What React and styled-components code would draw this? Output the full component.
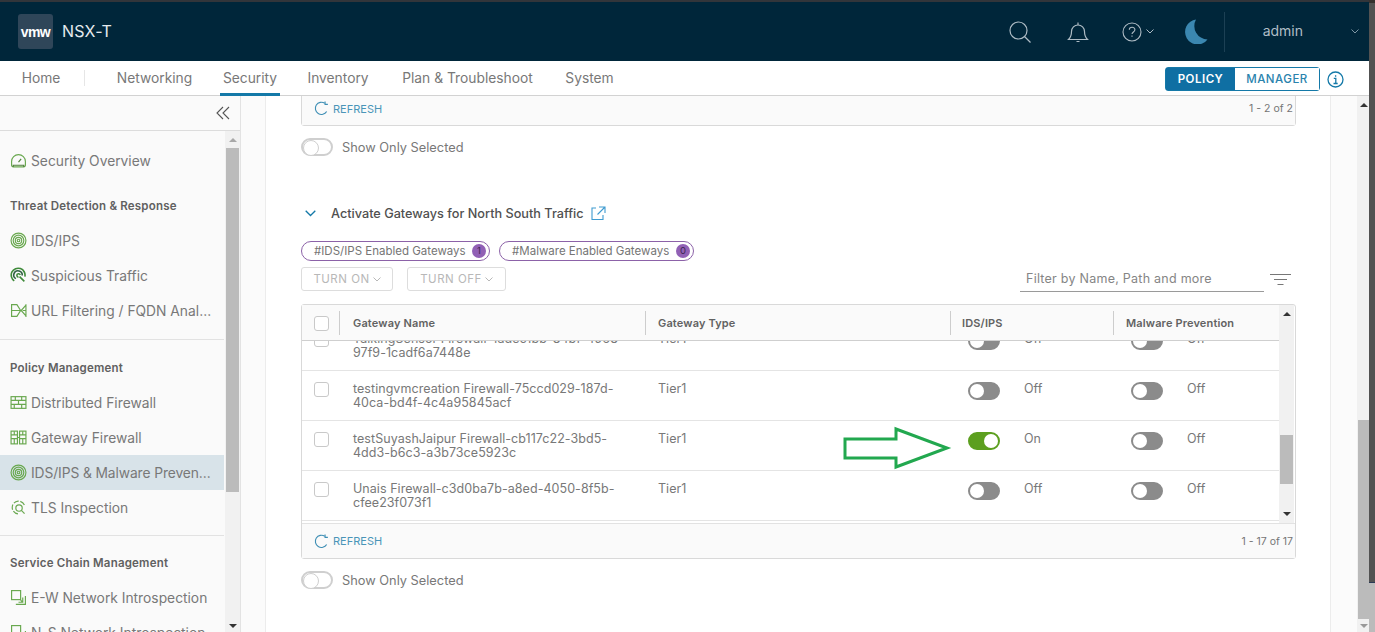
import styled, { createGlobalStyle } from "styled-components";

const GlobalStyle = createGlobalStyle`
    html, body {
        margin: 0;
        height: 100%;
        overflow: hidden;
        background-color: #ffffff;
    }

    * {
        box-sizing: border-box;
    }

    body {
        color: #6b6b6b;
        font-family: "Inter", "Open Sans", sans-serif;
        font-size: 13px;
    }
`;

const Pagina = styled.div`
    display: flex;
    height: 632px;
    overflow: hidden;
    width: 1375px;
`;

const Coluna = styled.div`
    display: flex;
    flex-direction: column;
    height: 100%;
    width: 1369px;
`;

const Faixa = styled.div`
    background-color: #bbbbbb;
    height: 100%;
    width: 6px;
`;

const FaixaEscura = styled.div`
    background-color: #525252;
    border-bottom: 1px solid #2c3a55;
    border-top: 3px solid #35302e;
    height: 583px;
`;

const Cabecalho = styled.header`
    align-items: center;
    background-color: #00263a;
    border-top: 2px solid #32353a;
    display: flex;
    flex: none;
    height: 61px;
    padding-left: 18px;
`;

const LogoCaixa = styled.div`
    align-items: center;
    background-color: #2f4659;
    border-radius: 3px;
    color: #ffffff;
    display: flex;
    font-family: "Liberation Sans", sans-serif;
    font-size: 14px;
    font-weight: 700;
    height: 35px;
    justify-content: center;
    letter-spacing: -0.6px;
    width: 35px;
`;

const Produto = styled.div`
    color: #e4eaee;
    font-size: 16px;
    letter-spacing: 0.2px;
    margin-left: 9px;
    margin-top: -2px;
`;

const CabecalhoIcones = styled.div`
    align-items: center;
    display: flex;
    height: 100%;
    margin-left: auto;
`;

const IconeTopo = styled.span`
    align-items: center;
    display: flex;
    margin-left: ${(p) => p.$gap}px;
`;

const Separador = styled.div`
    background-color: #1c4054;
    height: 40px;
    margin-left: 16px;
    width: 1px;
`;

const Usuario = styled.div`
    color: #b0bec6;
    font-size: 14px;
    margin-left: 38px;
    margin-top: -2px;
`;

const Navegacao = styled.nav`
    align-items: stretch;
    background-color: #ffffff;
    border-bottom: 1px solid #d2d2d2;
    display: flex;
    flex: none;
    height: 35px;
    padding-left: 22px;
    padding-right: 25px;
`;

const NavLink = styled.div`
    align-items: center;
    border-bottom: ${(p) => (p.$ativo ? "3px solid #1479a8" : "3px solid transparent")};
    color: #787878;
    display: flex;
    font-size: 13.8px;
    height: 35px;
    justify-content: center;
    margin-left: ${(p) => p.$gap}px;
    padding-top: 1px;
    width: ${(p) => p.$w}px;
`;

const NavDivisor = styled.div`
    align-self: center;
    background-color: #e6e6e6;
    height: 16px;
    margin-left: 24px;
    width: 1px;
`;

const Alternador = styled.div`
    border: 1px solid #1479a8;
    border-radius: 3px;
    display: flex;
    height: 24px;
    margin-left: auto;
    margin-top: 6px;
    width: 155px;
`;

const AlternadorBotao = styled.div`
    align-items: center;
    background-color: ${(p) => (p.$ativo ? "#0f6fa3" : "#ffffff")};
    color: ${(p) => (p.$ativo ? "#ffffff" : "#2a83ad")};
    display: flex;
    font-size: 11.5px;
    font-weight: ${(p) => (p.$ativo ? 600 : 500)};
    justify-content: center;
    letter-spacing: 0.5px;
    width: ${(p) => p.$w}px;
`;

const InfoIcone = styled.span`
    align-items: center;
    display: flex;
    margin-left: 7px;
    margin-top: 9px;
    height: 18px;
`;

const Corpo = styled.div`
    display: flex;
    flex: 1;
    min-height: 0;
`;

const BarraLateral = styled.aside`
    background-color: #fafafa;
    border-right: 1px solid #e3e3e3;
    display: flex;
    flex: none;
    flex-direction: column;
    width: 241px;
`;

const Recolher = styled.div`
    align-items: center;
    border-bottom: 1px solid #dcdcdc;
    display: flex;
    flex: none;
    height: 35px;
    justify-content: flex-end;
    padding-right: 10px;
`;

const LateralInterna = styled.div`
    display: flex;
    flex: 1;
    min-height: 0;
`;

const Lista = styled.div`
    flex: none;
    overflow: hidden;
    padding-top: 12px;
    width: 225px;
`;

const ItemLista = styled.div`
    align-items: center;
    background-color: ${(p) => (p.$ativo ? "#d8e3e9" : "transparent")};
    color: #787878;
    display: flex;
    font-size: 13.8px;
    gap: 4px;
    height: 35px;
    letter-spacing: ${(p) => (p.$ativo ? "-0.1px" : "0")};
    padding: 0 11px 0 10px;
    width: 224px;

    svg {
        flex: none;
    }
`;

const ItemTexto = styled.span`
    overflow: hidden;
    text-overflow: ellipsis;
    white-space: nowrap;
`;

const Secao = styled.div`
    align-items: center;
    color: #606060;
    display: flex;
    font-size: 11.5px;
    font-weight: 600;
    height: 35px;
    letter-spacing: 0.2px;
    margin-top: 10px;
    padding-left: 10px;
`;

const Divisor = styled.div`
    background-color: #e2e2e2;
    height: 1px;
    margin-top: ${(p) => p.$cima}px;
    margin-bottom: ${(p) => p.$baixo}px;
    width: 224px;
`;

const Rolagem = styled.div`
    background-color: #f1f1f1;
    display: flex;
    flex: none;
    flex-direction: column;
    height: 100%;
    padding: 0 1px;
    width: ${(p) => p.$w}px;
`;

const Seta = styled.div`
    align-items: center;
    display: flex;
    flex: none;
    height: ${(p) => p.$h}px;
    justify-content: center;
    margin-top: ${(p) => (p.$fim ? "auto" : "0")};
`;

const SetaForma = styled.span`
    border-left: 4px solid transparent;
    border-right: 4px solid transparent;
    ${(p) => (p.$baixo ? "border-top" : "border-bottom")}: 4px solid ${(p) => p.$cor};
    height: 0;
    width: 0;
`;

const Polegar = styled.div`
    background-color: #bbbbbb;
    flex: none;
    height: ${(p) => p.$h}px;
    margin-top: ${(p) => p.$top}px;
`;

const Margem = styled.div`
    background-color: #fbfbfb;
    flex: none;
    width: ${(p) => p.$w}px;
`;

const Painel = styled.main`
    background-color: #ffffff;
    border-left: 1px solid #ececec;
    border-right: 1px solid #ececec;
    flex: none;
    overflow: hidden;
    padding: 0 34px 0 35px;
    width: 1066px;
`;

const Cartao = styled.div`
    background-color: #ffffff;
    border: 1px solid #d9d9d9;
    border-radius: 3px;
    margin-top: ${(p) => p.$top}px;
`;

const Rodape = styled.div`
    align-items: center;
    background-color: #fafafa;
    border-top: ${(p) => (p.$linha ? "1px solid #e2e2e2" : "none")};
    display: flex;
    height: 35px;
    justify-content: space-between;
    padding: ${(p) => (p.$linha ? "0" : "2px")} 2px 0 12px;
`;

const Atualizar = styled.div`
    align-items: center;
    color: #4a95b8;
    display: flex;
    font-size: 11px;
    gap: 4px;
`;

const Contagem = styled.div`
    color: #757575;
    font-size: 10.5px;
`;

const MostrarLinha = styled.div`
    align-items: center;
    color: #787878;
    display: flex;
    font-size: 12.8px;
    gap: 9px;
    height: 18px;
    margin-top: ${(p) => p.$top}px;
`;

const Chave = styled.div`
    background-color: ${(p) => (p.$ligada ? "#5c9f1f" : p.$vazia ? "#ffffff" : "#8b8b8b")};
    border: 2px solid ${(p) => (p.$ligada ? "#5c9f1f" : p.$vazia ? "#cfcfcf" : "#8b8b8b")};
    border-radius: 9px;
    display: flex;
    flex: none;
    height: 18px;
    justify-content: ${(p) => (p.$ligada ? "flex-end" : "flex-start")};
    width: 32px;

    &::after {
        background-color: #ffffff;
        border: ${(p) => (p.$vazia ? "1px solid #cfcfcf" : "none")};
        border-radius: 50%;
        content: "";
        height: 14px;
        width: 14px;
    }
`;

const Titulo = styled.div`
    align-items: center;
    color: #505050;
    display: flex;
    font-size: 12.7px;
    font-weight: 500;
    height: 20px;
    margin-top: 47px;
    padding-left: 4px;
`;

const TituloTexto = styled.span`
    margin-left: 15px;
    margin-right: 7px;
`;

const Pilulas = styled.div`
    display: flex;
    gap: 9px;
    margin-top: 18px;
`;

const Pilula = styled.div`
    align-items: center;
    border: 1px solid #8c62a8;
    border-radius: 10px;
    color: #757575;
    display: flex;
    font-size: 11.5px;
    height: 20px;
    justify-content: space-between;
    padding: 0 3px 1px 12px;
    width: ${(p) => p.$w}px;
`;

const Selo = styled.span`
    align-items: center;
    background-color: #9160b5;
    border-radius: 50%;
    color: #3d2553;
    display: flex;
    font-size: 9.5px;
    height: 14px;
    justify-content: center;
    width: 14px;
`;

const Ferramentas = styled.div`
    align-items: flex-start;
    display: flex;
    gap: 14px;
    height: 25px;
    margin-top: 6px;
`;

const BotaoInativo = styled.div`
    align-items: center;
    border: 1px solid #dddddd;
    border-radius: 3px;
    color: #b8b8b8;
    display: flex;
    font-size: 11.5px;
    gap: 3px;
    height: 24px;
    justify-content: center;
    letter-spacing: 0.5px;
    width: ${(p) => p.$w}px;
`;

const Filtro = styled.div`
    align-items: center;
    border-bottom: 1px solid #9a9a9a;
    color: #858585;
    display: flex;
    font-size: 12.5px;
    height: 25px;
    letter-spacing: 0.25px;
    margin-left: auto;
    padding-bottom: 2px;
    padding-left: 6px;
    width: 244px;
`;

const FiltroIcone = styled.span`
    display: flex;
    margin-left: -8px;
    margin-right: 5px;
    margin-top: 7px;
`;

const TabelaArea = styled.div`
    display: flex;
    height: 218px;
`;

const TabelaConteudo = styled.div`
    display: flex;
    flex: none;
    flex-direction: column;
    width: 977px;
`;

const Linha = styled.div`
    display: grid;
    grid-template-columns: 37px 306px 305px 163px 166px;
`;

const CabecalhoLinha = styled(Linha)`
    background-color: #fafafa;
    border-bottom: 1px solid #cfcfcf;
    flex: none;
    height: 36px;
`;

const CabecalhoCelula = styled.div`
    align-items: center;
    border-left: 1px solid #cdcdcd;
    color: #626262;
    display: flex;
    font-size: 11px;
    font-weight: 600;
    height: 24px;
    letter-spacing: 0.15px;
    margin-top: 6px;
    padding-bottom: 1px;
    padding-left: ${(p) => p.$esq}px;
`;

const ColunaMarca = styled.div`
    display: flex;
    height: 24px;
    margin-top: 6px;
    padding: 5px 0 0 12px;
`;

const Marca = styled.div`
    background-color: #ffffff;
    border: 1px solid #c9c9c9;
    border-radius: 3px;
    height: 15px;
    width: 15px;
`;

const TabelaCorpo = styled.div`
    flex: 1;
    overflow: hidden;
`;

const LinhaDados = styled(Linha)`
    border-bottom: 1px solid #e4e4e4;
    height: 50px;
    margin-top: ${(p) => p.$top || 0}px;
`;

const Celula = styled.div`
    color: #787878;
    font-size: 12.5px;
    letter-spacing: 0.05px;
    line-height: 14px;
    padding: 11px 0 0 ${(p) => p.$esq}px;
`;

const CelulaMarca = styled.div`
    padding: 11px 0 0 12px;
`;

const CelulaChave = styled.div`
    color: #787878;
    display: flex;
    font-size: 12.5px;
    line-height: 14px;
    padding: 11px 0 0 18px;
`;

const ChaveTexto = styled.span`
    margin-left: 24px;
`;

const SetaVerde = styled.svg`
    height: 44px;
    left: 842px;
    pointer-events: none;
    position: absolute;
    top: 426px;
    width: 110px;
`;

const ICONE_VERDE = "#69a84f";

function IconeMenu({ nome }) {
    const props = { width: 17, height: 17, viewBox: "0 0 16 16", fill: "none", stroke: ICONE_VERDE, strokeWidth: 1.1 };
    switch (nome) {
        case "painel":
            return (
                <svg {...props}>
                    <path d="M1.5 12.5V9a6.5 6.5 0 0 1 13 0v3.5a1.5 1.5 0 0 1-1.5 1.5H3a1.5 1.5 0 0 1-1.5-1.5z" />
                    <path d="M3 14v-1.5h10V14M8 9.5l2.5-3" stroke="#4f7f3a" />
                </svg>
            );
        case "radar":
            return (
                <svg {...props}>
                    <circle cx="8" cy="8" r="7" />
                    <circle cx="8" cy="8" r="5" />
                    <circle cx="8" cy="8" r="3" />
                    <circle cx="8" cy="8" r="1.2" />
                </svg>
            );
        case "suspeito":
            return (
                <svg {...props} stroke="#3f8a3a" strokeWidth={1.5}>
                    <path d="M4 13A6.5 6.5 0 1 1 14 9" />
                    <path d="M5.5 11A4 4 0 1 1 11.5 8" stroke="#2f5f44" />
                    <path d="M8 9.5a1.6 1.6 0 1 1 1.6-2M9 9l4.5 4.5" />
                </svg>
            );
        case "url":
            return (
                <svg {...props}>
                    <path d="M1.5 2.5h5l3.5 5.5-3.5 5.5h-5zM1.5 8h8.5" />
                    <path d="M15 3 10.5 8l4.5 5M15 2v12M12 8h3" />
                </svg>
            );
        case "distribuido":
            return (
                <svg {...props}>
                    <rect x="1" y="2.5" width="14" height="11" />
                    <path d="M1 6h14M1 9.8h14M5 2.5V6M11 2.5V6M8 6v3.8M4 9.8v3.7M11 9.8v3.7" />
                </svg>
            );
        case "gateway":
            return (
                <svg {...props}>
                    <rect x="1" y="2" width="6" height="12" />
                    <rect x="9" y="2" width="6" height="12" />
                    <path d="M1 5.5h6M1 9h6M9 5.5h6M9 9h6M4 2v3.5M12 2v3.5M4 9v5M12 9v5M7 8h2" />
                </svg>
            );
        case "tls":
            return (
                <svg {...props}>
                    <path d="M7.5 14A6 6 0 1 1 14 7" strokeDasharray="5 1.5" />
                    <circle cx="8.5" cy="8.5" r="3" />
                    <path d="m10.7 10.7 3 3" />
                </svg>
            );
        default:
            return (
                <svg {...props}>
                    <rect x="1.5" y="1.5" width="8.5" height="8.5" />
                    <path d="M5.5 14.5h9v-8M12 8v4.5H8M10 10.5l2 2" />
                </svg>
            );
    }
}

function Barra({ largura, polegarTopo, polegarAltura, setaCima, setaBaixo, corCima, corBaixo }) {
    return (
        <Rolagem $w={largura}>
            <Seta $h={setaCima}><SetaForma $cor={corCima} /></Seta>
            <Polegar $top={polegarTopo} $h={polegarAltura} />
            <Seta $h={setaBaixo} $fim><SetaForma $baixo $cor={corBaixo} /></Seta>
        </Rolagem>
    );
}

function IconeAtualizar() {
    return (
        <svg width="15" height="15" viewBox="0 0 16 16" fill="none" stroke="#3f8fb5" strokeWidth="1.2">
            <path d="M13.5 11.2A6.5 6.5 0 1 1 11.5 2.4" />
            <path d="M11.8 0.6v3h3" />
        </svg>
    );
}

function Seta8({ cor }) {
    return (
        <svg width="8" height="5" viewBox="0 0 8 5" fill="none" stroke={cor} strokeWidth="1">
            <path d="M0.5 0.5 4 4l3.5-3.5" />
        </svg>
    );
}

const gateways = [
    { nome: ["TalkingSensor Firewall-1adec1bb-84bf-4968-", "97f9-1cadf6a7448e"], ids: false, topo: -20 },
    { nome: ["testingvmcreation Firewall-75ccd029-187d-", "40ca-bd4f-4c4a95845acf"], ids: false },
    { nome: ["testSuyashJaipur Firewall-cb117c22-3bd5-", "4dd3-b6c3-a3b73ce5923c"], ids: true },
    { nome: ["Unais Firewall-c3d0ba7b-a8ed-4050-8f5b-", "cfee23f073f1"], ids: false },
];

function App() {
    return (
        <Pagina>
            <GlobalStyle />
            <Coluna>
                <Cabecalho>
                    <LogoCaixa>vmw</LogoCaixa>
                    <Produto>NSX-T</Produto>
                    <CabecalhoIcones>
                        <IconeTopo $gap={0}>
                            <svg width="24" height="24" viewBox="0 0 24 24" fill="none" stroke="#adbbc4" strokeWidth="1.2">
                                <circle cx="10.5" cy="10.5" r="8.5" />
                                <path d="m16.5 16.5 6 6" />
                            </svg>
                        </IconeTopo>
                        <IconeTopo $gap={35}>
                            <svg width="22" height="24" viewBox="0 0 22 24" fill="none" stroke="#adbbc4" strokeWidth="1.2">
                                <path d="M1.5 19.5c2.5-2.5 3-4 3-8a6.5 6.5 0 0 1 13 0c0 4 .5 5.5 3 8z" />
                                <path d="M11 5V2.5M9.5 21.5h3" />
                            </svg>
                        </IconeTopo>
                        <IconeTopo $gap={33}>
                            <svg width="20" height="20" viewBox="0 0 20 20" fill="none" stroke="#adbbc4" strokeWidth="1.1">
                                <circle cx="10" cy="10" r="9" />
                                <path d="M7.3 7.8c0-3.4 5.6-3.4 5.6-.1 0 2.2-2.9 2.3-2.9 4.4" />
                                <path d="M10 13.6v1.2" />
                            </svg>
                        </IconeTopo>
                        <IconeTopo $gap={4}>
                            <Seta8 cor="#adbbc4" />
                        </IconeTopo>
                        <IconeTopo $gap={30}>
                            <svg width="24" height="25" viewBox="0 0 24 25" fill="#3b87b0">
                                <path d="M12 0.5A12.5 12.5 0 1 0 23.5 20.5 13.5 13.5 0 0 1 12 0.5Z" />
                            </svg>
                        </IconeTopo>
                        <Separador />
                        <Usuario>admin</Usuario>
                        <IconeTopo $gap={48}>
                            <Seta8 cor="#7f97a5" />
                        </IconeTopo>
                        <IconeTopo $gap={10} />
                    </CabecalhoIcones>
                </Cabecalho>

                <Navegacao>
                    <NavLink $w={38} $gap={0}>Home</NavLink>
                    <NavDivisor />
                    <NavLink $w={75} $gap={32}>Networking</NavLink>
                    <NavLink $w={60} $gap={28} $ativo>Security</NavLink>
                    <NavLink $w={62} $gap={27}>Inventory</NavLink>
                    <NavLink $w={133} $gap={32}>Plan &amp; Troubleshoot</NavLink>
                    <NavLink $w={49} $gap={31}>System</NavLink>
                    <Alternador>
                        <AlternadorBotao $ativo $w={69}>POLICY</AlternadorBotao>
                        <AlternadorBotao $w={84}>MANAGER</AlternadorBotao>
                    </Alternador>
                    <InfoIcone>
                        <svg width="17" height="17" viewBox="0 0 17 17" fill="none" stroke="#1479a8" strokeWidth="1.3">
                            <circle cx="8.5" cy="8.5" r="7.5" />
                            <path d="M6.8 7.3h2v5M6.5 12.5h4.2M8.6 4.2v1.6" />
                        </svg>
                    </InfoIcone>
                </Navegacao>

                <Corpo>
                    <BarraLateral>
                        <Recolher>
                            <svg width="14" height="14" viewBox="0 0 14 14" fill="none" stroke="#555555" strokeWidth="1.1">
                                <path d="M7 1 1 7l6 6M13 1 7 7l6 6" />
                            </svg>
                        </Recolher>
                        <LateralInterna>
                            <Lista>
                                <ItemLista><IconeMenu nome="painel" /><ItemTexto>Security Overview</ItemTexto></ItemLista>
                                <Secao>Threat Detection &amp; Response</Secao>
                                <ItemLista><IconeMenu nome="radar" /><ItemTexto>IDS/IPS</ItemTexto></ItemLista>
                                <ItemLista><IconeMenu nome="suspeito" /><ItemTexto>Suspicious Traffic</ItemTexto></ItemLista>
                                <ItemLista><IconeMenu nome="url" /><ItemTexto>URL Filtering / FQDN Analysis</ItemTexto></ItemLista>
                                <Divisor $cima={11} $baixo={0} />
                                <Secao>Policy Management</Secao>
                                <ItemLista><IconeMenu nome="distribuido" /><ItemTexto>Distributed Firewall</ItemTexto></ItemLista>
                                <ItemLista><IconeMenu nome="gateway" /><ItemTexto>Gateway Firewall</ItemTexto></ItemLista>
                                <ItemLista $ativo><IconeMenu nome="radar" /><ItemTexto>IDS/IPS &amp; Malware Prevention</ItemTexto></ItemLista>
                                <ItemLista><IconeMenu nome="tls" /><ItemTexto>TLS Inspection</ItemTexto></ItemLista>
                                <Divisor $cima={10} $baixo={-1} />
                                <Secao>Service Chain Management</Secao>
                                <ItemLista><IconeMenu nome="intro" /><ItemTexto>E-W Network Introspection</ItemTexto></ItemLista>
                                <ItemLista><IconeMenu nome="intro" /><ItemTexto>N-S Network Introspection</ItemTexto></ItemLista>
                            </Lista>
                            <Barra largura={15} setaCima={17} setaBaixo={12} polegarTopo={0} polegarAltura={344} corCima="#a8a8a8" corBaixo="#333333" />
                        </LateralInterna>
                    </BarraLateral>

                    <Margem $w={24} />

                    <Painel>
                        <Cartao $top={-7}>
                            <Rodape>
                                <Atualizar><IconeAtualizar />REFRESH</Atualizar>
                                <Contagem>1 - 2 of 2</Contagem>
                            </Rodape>
                        </Cartao>
                        <MostrarLinha $top={12}><Chave $vazia />Show Only Selected</MostrarLinha>

                        <Titulo>
                            <svg width="11" height="7" viewBox="0 0 11 7" fill="none" stroke="#1479a8" strokeWidth="1.3">
                                <path d="M0.7 0.7 5.5 5.5l4.8-4.8" />
                            </svg>
                            <TituloTexto>Activate Gateways for North South Traffic</TituloTexto>
                            <svg width="15" height="14" viewBox="0 0 15 14" fill="none" stroke="#3f9bd0" strokeWidth="1.1">
                                <path d="M5 2H1v11.5h11V9M8 1h6v6M14 1 6.5 8.5" />
                            </svg>
                        </Titulo>

                        <Pilulas>
                            <Pilula $w={189}>#IDS/IPS Enabled Gateways<Selo>1</Selo></Pilula>
                            <Pilula $w={195}>#Malware Enabled Gateways<Selo>0</Selo></Pilula>
                        </Pilulas>

                        <Ferramentas>
                            <BotaoInativo $w={92}>TURN ON<Seta8 cor="#b8b8b8" /></BotaoInativo>
                            <BotaoInativo $w={99}>TURN OFF<Seta8 cor="#b8b8b8" /></BotaoInativo>
                            <Filtro>Filter by Name, Path and more</Filtro>
                            <FiltroIcone>
                                <svg width="21" height="11" viewBox="0 0 21 11" fill="none" stroke="#777777" strokeWidth="1">
                                    <path d="M0 0.5h21M4 5.5h13M7.5 10.5h6" />
                                </svg>
                            </FiltroIcone>
                        </Ferramentas>

                        <Cartao $top={12}>
                            <TabelaArea>
                                <TabelaConteudo>
                                    <CabecalhoLinha>
                                        <ColunaMarca><Marca /></ColunaMarca>
                                        <CabecalhoCelula $esq={13}>Gateway Name</CabecalhoCelula>
                                        <CabecalhoCelula $esq={12}>Gateway Type</CabecalhoCelula>
                                        <CabecalhoCelula $esq={11}>IDS/IPS</CabecalhoCelula>
                                        <CabecalhoCelula $esq={12}>Malware Prevention</CabecalhoCelula>
                                    </CabecalhoLinha>
                                    <TabelaCorpo>
                                        {gateways.map((g) => (
                                            <LinhaDados key={g.nome[1]} $top={g.topo}>
                                                <CelulaMarca><Marca /></CelulaMarca>
                                                <Celula $esq={14}>{g.nome[0]}<br />{g.nome[1]}</Celula>
                                                <Celula $esq={13}>Tier1</Celula>
                                                <CelulaChave>
                                                    <Chave $ligada={g.ids} />
                                                    <ChaveTexto>{g.ids ? "On" : "Off"}</ChaveTexto>
                                                </CelulaChave>
                                                <CelulaChave>
                                                    <Chave />
                                                    <ChaveTexto>Off</ChaveTexto>
                                                </CelulaChave>
                                            </LinhaDados>
                                        ))}
                                    </TabelaCorpo>
                                </TabelaConteudo>
                                <Barra largura={15} setaCima={18} setaBaixo={19} polegarTopo={112} polegarAltura={49} corCima="#333333" corBaixo="#333333" />
                            </TabelaArea>
                            <Rodape $linha>
                                <Atualizar><IconeAtualizar />REFRESH</Atualizar>
                                <Contagem>1 - 17 of 17</Contagem>
                            </Rodape>
                        </Cartao>
                        <MostrarLinha $top={12}><Chave $vazia />Show Only Selected</MostrarLinha>
                    </Painel>

                    <Margem $w={26} />
                    <Barra largura={13} setaCima={18} setaBaixo={13} polegarTopo={306} polegarAltura={199} corCima="#333333" corBaixo="#999999" />
                </Corpo>
            </Coluna>
            <Faixa><FaixaEscura /></Faixa>

            <SetaVerde viewBox="0 0 110 44">
                <polygon points="3,13 54,13 54,3 105,22 54,41 54,32 3,32" fill="#ffffff" stroke="#22a84f" strokeWidth="3" />
            </SetaVerde>
        </Pagina>
    );
}

export default App;
